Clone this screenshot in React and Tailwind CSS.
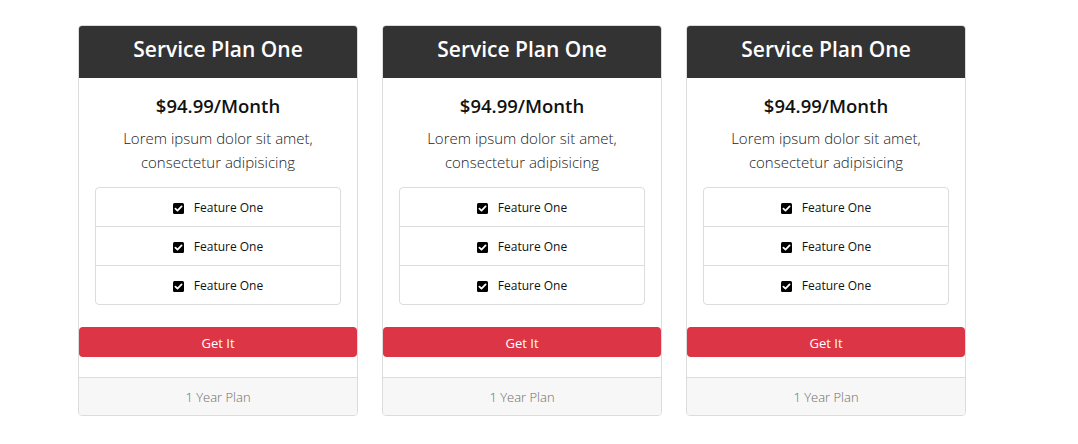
import React from "react";

function Check() {
  return (
    <svg width="11" height="11" viewBox="0 0 11 11" className="shrink-0">
      <rect x="0" y="0" width="11" height="11" rx="1.5" fill="#000" />
      <path d="M2.4 5.6 L4.5 7.6 L8.6 3.4" stroke="#fff" strokeWidth="1.8" fill="none" strokeLinecap="round" strokeLinejoin="round" />
    </svg>
  );
}

function Card() {
  return (
    <div className="w-[280px] border border-[#dcdcdc] rounded-[4px] flex flex-col overflow-hidden bg-white">
      <div className="h-[52px] pb-[5px] bg-[#333333] text-white text-[21px] font-semibold flex items-center justify-center">
        Service Plan One
      </div>
      <div className="px-[16px] flex flex-col items-center">
        <div className="mt-[15px] text-[18.5px] leading-[26px] font-semibold text-[#111]">$94.99/Month</div>
        <div className="mt-[7px] text-[15px] leading-[24px] font-light text-[#222] text-center">
          Lorem ipsum dolor sit amet,
          <br />
          consectetur adipisicing
        </div>
        <div className="mt-[13px] w-full border border-[#dcdcdc] rounded-[4px] flex flex-col">
          {[0, 1, 2].map((i) => (
            <div
              key={i}
              className={
                "flex items-center justify-center gap-[10px] pt-[2px] text-[12px] text-[#111] " +
                (i > 0 ? "h-[39px] border-t border-[#dcdcdc]" : "h-[38px]")
              }
            >
              <Check />
              <span>Feature One</span>
            </div>
          ))}
        </div>
      </div>
      <button className="mt-[22px] h-[30px] pt-[3px] w-full rounded-[4px] bg-[#dc3545] text-white text-[13px] flex items-center justify-center">
        Get It
      </button>
      <div className="mt-[20px] h-[38px] pt-[2px] border-t border-[#dcdcdc] bg-[#f7f7f7] text-[#6c6c6c] text-[13px] font-light flex items-center justify-center">
        1 Year Plan
      </div>
    </div>
  );
}

export default function App() {
  return (
    <div
      className="w-[1078px] h-[444px] bg-white pt-[25px] pl-[78px] flex gap-[24px] items-start"
      style={{ fontFamily: '"Open Sans", "Noto Sans", sans-serif' }}
    >
      <Card />
      <Card />
      <Card />
    </div>
  );
}
